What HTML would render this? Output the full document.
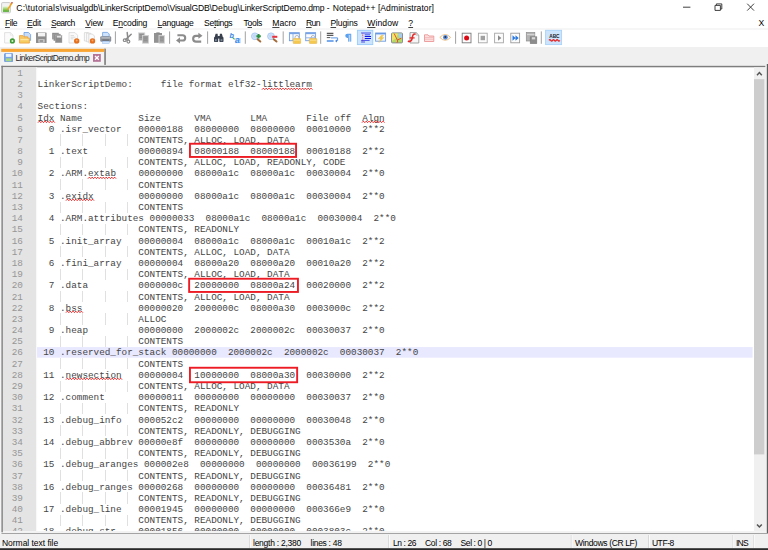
<!DOCTYPE html>
<html><head><meta charset="utf-8"><title>Notepad++</title>
<style>
*{box-sizing:border-box;margin:0;padding:0}
html,body{width:768px;height:550px;overflow:hidden;background:#fff}
body{position:relative;font-family:"Liberation Sans",sans-serif;font-size:8.5px;color:#000}
.abs{position:absolute}
#title{left:16px;top:1.6px;height:12px;line-height:12px;font-size:8.6px;/*TITLELS*/white-space:nowrap;color:#000;transform-origin:0 50%}
.menu{top:16.5px;height:12px;line-height:12px;font-size:8.6px;white-space:nowrap;transform-origin:0 50%}
.menu u{text-decoration:underline;text-decoration-thickness:0.8px;text-decoration-color:#444;text-underline-offset:0.8px}
#menuline{left:0;top:28.4px;width:768px;height:1.2px;background:#f1f1f1}
#tabbar{left:0;top:47px;width:768px;height:19px;background:#f0f0f0}
#tab{left:1.2px;top:49px;width:104.6px;height:16px;background:#f3f3f3;border-right:1.5px solid #747474}
#tabtop{left:1.2px;top:48.8px;width:103.2px;height:3.1px;background:#f9a534}
#tabtext{left:15.5px;top:51.7px;height:12px;line-height:12px;font-size:8.4px;white-space:nowrap;letter-spacing:-0.578px;color:#262626}
#edborder{left:1.4px;top:65.8px;width:765.4px;height:467.2px;border-top:1.5px solid #7e7e7e;border-left:1.5px solid #7e7e7e;border-right:2.5px solid #ececec;border-bottom:1.8px solid #f2f2f2;background:#fff}
#rline{left:766.8px;top:64px;width:1.2px;height:469px;background:#5e5e5e}
#bline{left:1.4px;top:533px;width:766.6px;height:1px;background:#a4a4a4}
#margin{left:2.9px;top:67.3px;width:33.1px;height:463.9px;background:#e4e4e4}
#fold{left:36px;top:67.3px;width:1px;height:463.9px;background:#f6f6f6}
#ed{left:3px;top:67.3px;width:751px;height:463.9px;overflow:hidden;font-family:"Liberation Mono",monospace;font-size:9.333px;color:#454545}
.ln{position:relative;height:11.2px;line-height:11.2px;white-space:pre}
.ln b{position:absolute;left:0;top:0.5px;width:19.9px;text-align:right;font-weight:normal;color:#969696;font-size:9.333px}
.ln span{position:absolute;left:34.6px;top:0.5px}
.ln u{text-decoration:none;position:relative;display:inline-block}
.ln u svg{position:absolute;left:0;top:8.6px;overflow:visible}
.g{position:absolute;top:0;width:1px;height:11.2px;margin-left:34.4px;background:#e0e0e0}
#sb{left:754px;top:67.3px;width:12.6px;height:463.9px;background:#f0f0f0}
#thumb{left:754px;top:79.2px;width:10.3px;height:375.2px;background:#cdcdcd}
#status{left:0;top:534px;width:768px;height:16px;background:#f0f0f0;border-bottom:1.8px solid #2a2a2a}
.st{top:537px;height:12px;line-height:12px;font-size:8.5px;white-space:nowrap}
.sep{top:535px;width:1px;height:13px;background:#d8d8d8;border-right:0.6px solid #fff;box-sizing:content-box}
</style></head><body>
<svg class="abs" style="left:0;top:0" width="768" height="550" viewBox="0 0 768 550">
<rect x="0" y="28.4" width="768" height="1.2" fill="#f1f1f1"/>
<rect x="0" y="47" width="768" height="19" fill="#f0f0f0"/>
<rect x="1.2" y="49" width="103.2" height="16" fill="#f3f3f3"/>
<rect x="104.3" y="48.6" width="1.5" height="16.3" fill="#747474"/>
<rect x="1.2" y="48.8" width="103.2" height="3.1" fill="#f9a534"/>
<rect x="0" y="65.8" width="1.4" height="468" fill="#f4f4f4"/>
<rect x="1.4" y="65.8" width="765.4" height="467.2" fill="#fff"/>
<rect x="1.4" y="65.8" width="764" height="1.5" fill="#7e7e7e"/>
<rect x="1.4" y="65.8" width="1.5" height="466.6" fill="#7e7e7e"/>
<rect x="2.9" y="67.3" width="33.1" height="463.7" fill="#e4e4e4"/>
<rect x="36" y="67.3" width="1.2" height="463.7" fill="#f8f8f8"/>
<rect x="37.1" y="347.1" width="715.5" height="10.6" fill="#e8e8ff"/>
<rect x="754" y="67.3" width="12.8" height="463.9" fill="#f0f0f0"/>
<rect x="754" y="79.2" width="10.3" height="375.2" fill="#cdcdcd"/>
<path d="M757 75.2 L759.4 72.6 L761.8 75.2" stroke="#555" stroke-width="1.5" fill="none"/>
<path d="M757 524.4 L759.4 527 L761.8 524.4" stroke="#555" stroke-width="1.5" fill="none"/>
<rect x="2.9" y="531.1" width="763.9" height="1.9" fill="#f2f2f2"/>
<rect x="766.8" y="64" width="1.2" height="469" fill="#5e5e5e"/>
<rect x="0" y="534" width="768" height="14.2" fill="#f0f0f0"/>
<rect x="1.4" y="533" width="766.6" height="1" fill="#a4a4a4"/>
<rect x="0" y="548.2" width="768" height="1.8" fill="#2a2a2a"/>
<g fill="#d6d6d6">
<rect x="249" y="535" width="0.9" height="13"/><rect x="388.2" y="535" width="0.9" height="13"/><rect x="570.8" y="535" width="0.9" height="13"/>
<rect x="648.1" y="535" width="0.9" height="13"/><rect x="732.5" y="535" width="0.9" height="13"/><rect x="753.4" y="535" width="0.9" height="13"/>
</g>
<g fill="#ffffff">
<rect x="249.9" y="535" width="0.7" height="13"/><rect x="389.1" y="535" width="0.7" height="13"/><rect x="571.7" y="535" width="0.7" height="13"/>
<rect x="649" y="535" width="0.7" height="13"/><rect x="733.4" y="535" width="0.7" height="13"/><rect x="754.3" y="535" width="0.7" height="13"/>
</g>
</svg>
<!-- title bar -->
<svg class="abs" style="left:0;top:0" width="15" height="15" viewBox="0 0 15 15">
<defs><linearGradient id="gg" x1="0" y1="0" x2="0" y2="1"><stop offset="0" stop-color="#eef6e2"/><stop offset="0.55" stop-color="#8fd05a"/><stop offset="1" stop-color="#3fa41e"/></linearGradient></defs>
<rect x="1.6" y="2.6" width="8.8" height="10.2" rx="0.9" fill="#f3f3f3" stroke="#c4c4c4" stroke-width="0.9"/>
<rect x="2.9" y="6.2" width="6.2" height="5.6" fill="url(#gg)"/>
<path d="M11.9 3 L7.6 9.8" stroke="#f2a422" stroke-width="1.5" stroke-linecap="butt"/>
<path d="M7.9 9.3 L7 10.9 L8.5 10" fill="#c89050" stroke="none"/>
<circle cx="12" cy="2.7" r="0.8" fill="#c83838"/>
</svg>
<div id="title" class="abs"><span style="position:absolute;left:0.3px;top:0;white-space:pre;letter-spacing:0.139px">C:\</span><span style="position:absolute;left:11.7px;top:0;white-space:pre;letter-spacing:0.211px">tutorials\</span><span style="position:absolute;left:46.3px;top:0;white-space:pre;letter-spacing:-0.080px">visualgdb\</span><span style="position:absolute;left:84.2px;top:0;white-space:pre;letter-spacing:-0.082px">LinkerScriptDemo\</span><span style="position:absolute;left:153.5px;top:0;white-space:pre;letter-spacing:-0.196px">VisualGDB\</span><span style="position:absolute;left:195.8px;top:0;white-space:pre;letter-spacing:0.080px">Debug\</span><span style="position:absolute;left:224.0px;top:0;white-space:pre;letter-spacing:-0.148px">LinkerScriptDemo.dmp </span><span style="position:absolute;left:310.7px;top:0;white-space:pre;letter-spacing:0.375px">- </span><span style="position:absolute;left:316.7px;top:0;white-space:pre;letter-spacing:0.028px">Notepad++ </span><span style="position:absolute;left:361.9px;top:0;white-space:pre;letter-spacing:0.050px">[Administrator]</span></div>
<svg class="abs" style="left:668px;top:0" width="100" height="16" viewBox="0 0 100 16">
<path d="M15 7.2 H22.4" stroke="#2a2a2a" stroke-width="0.9" fill="none"/>
<path d="M47 5.4 H52.4 V10.4 H47 Z" stroke="#2a2a2a" stroke-width="0.9" fill="none" stroke-linejoin="round"/>
<path d="M48.4 5.2 V3.9 H53.8 V9 H52.6" stroke="#2a2a2a" stroke-width="0.9" fill="none" stroke-linejoin="round"/>
<path d="M79.2 3.7 L86 10.6 M86 3.7 L79.2 10.6" stroke="#2a2a2a" stroke-width="0.9" fill="none"/>
</svg>
<!-- menu -->
<div class="menu abs" style="left:5.0px;letter-spacing:-0.420px"><u>F</u>ile</div>
<div class="menu abs" style="left:27.1px;letter-spacing:-0.271px"><u>E</u>dit</div>
<div class="menu abs" style="left:51.1px;letter-spacing:-0.627px"><u>S</u>earch</div>
<div class="menu abs" style="left:85.2px;letter-spacing:-0.128px"><u>V</u>iew</div>
<div class="menu abs" style="left:112.7px;letter-spacing:-0.163px">E<u>n</u>coding</div>
<div class="menu abs" style="left:157.6px;letter-spacing:-0.307px"><u>L</u>anguage</div>
<div class="menu abs" style="left:204.1px;letter-spacing:-0.366px">Se<u>t</u>tings</div>
<div class="menu abs" style="left:243.6px;letter-spacing:-0.341px">T<u>o</u>ols</div>
<div class="menu abs" style="left:272.3px;letter-spacing:-0.048px"><u>M</u>acro</div>
<div class="menu abs" style="left:306.0px;letter-spacing:-0.633px"><u>R</u>un</div>
<div class="menu abs" style="left:330.5px;letter-spacing:-0.148px"><u>P</u>lugins</div>
<div class="menu abs" style="left:367.2px;letter-spacing:0.104px"><u>W</u>indow</div>
<div class="menu abs" style="left:408.3px;letter-spacing:0.000px"><u>?</u></div>
<div class="menu abs" style="left:758.5px;letter-spacing:0.000px">X</div>

<!-- toolbar -->
<svg class="abs" style="left:0;top:29px" width="768" height="19" viewBox="0 29 768 19" font-family="Liberation Sans, sans-serif">
<defs>
<linearGradient id="gpage" x1="0" y1="0" x2="1" y2="1"><stop offset="0" stop-color="#ffffff"/><stop offset="1" stop-color="#e6e6e6"/></linearGradient>
</defs>
<g stroke="#a2a2a2" stroke-width="1">
<path d="M115.4 31.4 V43.8"/><path d="M169.6 31.4 V43.8"/><path d="M207.6 31.4 V43.8"/><path d="M245.3 31.4 V43.8"/><path d="M283.2 31.4 V43.8"/><path d="M320.7 31.4 V43.8"/><path d="M455.6 31.4 V43.8"/><path d="M541.3 31.4 V43.8"/>
</g>
<!-- 1 new -->
<g>
<path d="M4.6 32.6 H10.4 L13 35.2 V43 H4.6 Z" fill="#fbfbfb" stroke="#dadada" stroke-width="0.8"/>
<path d="M10.4 32.6 V35.2 H13" fill="none" stroke="#e2e2e2" stroke-width="0.6"/>
<circle cx="12.4" cy="40.9" r="2.6" fill="#3f9c34"/>
<circle cx="12.4" cy="40.9" r="1" fill="#d8f0d0"/>
</g>
<!-- 2 open -->
<g>
<path d="M24 32.5 H28.6 L30.6 34.5 V40.4 H24 Z" fill="#c6dcf8" stroke="#6c9ce2" stroke-width="0.8"/>
<path d="M19.5 35.6 H23 L24 36.8 H27.6 V38 H29.4 V43.1 H19.5 Z" fill="#f8c662" stroke="#eba23e" stroke-width="0.8"/>
<path d="M20.4 39.6 H28.6" stroke="#fbe6a0" stroke-width="1.4"/>
<path d="M20.4 41.6 H28.6" stroke="#f3d060" stroke-width="1"/>
</g>
<!-- 3 save (disabled) -->
<g>
<rect x="36" y="32.4" width="10.6" height="10.7" rx="0.6" fill="#8e8e8e"/>
<rect x="38" y="33" width="7.2" height="3.4" fill="#f4f4f4"/>
<rect x="38.4" y="39.2" width="6.2" height="3.4" fill="#cfcfcf"/>
<rect x="39.6" y="40.2" width="3.6" height="1.6" fill="#8a8a8a"/>
</g>
<!-- 4 save all -->
<g>
<rect x="52.2" y="32.8" width="6.6" height="6.6" fill="#8a8a8a"/>
<rect x="53.8" y="34" width="6.8" height="6.8" fill="#909090" stroke="#b4b4b4" stroke-width="0.4"/>
<rect x="55.2" y="35.4" width="6.8" height="7.4" fill="#8c8c8c" stroke="#b4b4b4" stroke-width="0.4"/>
<rect x="56.8" y="35.8" width="4.4" height="1.8" fill="#e2e2e2"/>
</g>
<!-- 5 close -->
<g>
<path d="M69 32.6 H75 L77.6 35.2 V43 H69 Z" fill="#fafafa" stroke="#d8d8d8" stroke-width="0.8"/>
<path d="M70.6 35.6 H74 M70.6 37.2 H75.4 M70.6 38.8 H73.4" stroke="#cfcfcf" stroke-width="0.7"/>
<circle cx="76.7" cy="40.9" r="2.7" fill="#e66f1c"/>
<circle cx="76.7" cy="40.6" r="1" fill="#f6a868"/>
</g>
<!-- 6 close all -->
<g>
<path d="M84.4 32.6 H88.4 V41 H84.4 Z" fill="#fafafa" stroke="#d6d6d6" stroke-width="0.8"/>
<path d="M86.6 33.2 H90.6 V41.8 H86.6 Z" fill="#fafafa" stroke="#d6d6d6" stroke-width="0.8"/>
<path d="M88.8 34 H92.4 L94.4 36 V43 H88.8 Z" fill="#fbfbfb" stroke="#d4d4d4" stroke-width="0.8"/>
<circle cx="92.5" cy="40.9" r="2.7" fill="#e66f1c"/>
<circle cx="92.5" cy="40.6" r="1" fill="#f6a868"/>
</g>
<!-- 7 print -->
<g>
<path d="M102.6 36.6 V32.4 H107.6 L109.2 34 V36.6 Z" fill="#cfe4fc" stroke="#6a9ee0" stroke-width="0.8"/>
<rect x="100.2" y="36.3" width="11" height="5.4" rx="1.2" fill="#8c9098"/>
<rect x="101.4" y="37.4" width="8.6" height="1" fill="#c8ccd2"/>
<rect x="102.4" y="39.6" width="6.8" height="1" fill="#5c6068"/>
<rect x="102.6" y="41.2" width="6.6" height="2.2" fill="#d4e6fb" stroke="#8eb6ea" stroke-width="0.5"/>
</g>
<!-- 8 cut -->
<g stroke="#8a8a8a" fill="none" stroke-linecap="round">
<path d="M127.2 32.6 L128 39.8" stroke-width="1.5"/>
<path d="M131.2 34.2 L125.6 39.6" stroke-width="1.5"/>
<ellipse cx="124.8" cy="40.2" rx="1.5" ry="1.3" stroke-width="1.2"/>
<ellipse cx="128.4" cy="41.6" rx="1.4" ry="1.5" stroke-width="1.2"/>
</g>
<!-- 9 copy -->
<g>
<rect x="138.4" y="32.8" width="6.4" height="7.6" fill="#a4a4a4" stroke="#dcdcdc" stroke-width="0.8"/>
<rect x="142.4" y="35.4" width="6.2" height="7.8" fill="#a0a0a0" stroke="#d4d4d4" stroke-width="0.8"/>
<path d="M139.5 34.5 H143.5 M139.5 36 H142 M139.5 37.5 H142 M143.6 37.2 H147.4 M143.6 38.8 H147.4 M143.6 40.4 H147.4" stroke="#8a8a8a" stroke-width="0.7"/>
</g>
<!-- 10 paste -->
<g>
<rect x="154" y="33" width="8" height="9.8" fill="#929292"/>
<rect x="156.3" y="32.4" width="3.4" height="1.6" fill="#8a8a8a"/>
<rect x="159" y="35.4" width="5.6" height="7.8" fill="#a2a2a2" stroke="#dadada" stroke-width="0.8"/>
<path d="M160 37.4 H163.4 M160 39 H163.4 M160 40.6 H163.4" stroke="#8a8a8a" stroke-width="0.7"/>
</g>
<!-- 11 undo -->
<g fill="none" stroke="#8c8c8c" stroke-width="2.1">
<path d="M177.4 35.3 H182.6 A2.6 2.6 0 0 1 182.6 40.5 H179.5"/>
<path d="M180 37.3 L176 40.5 L180 43.4 Z" fill="#8c8c8c" stroke="none"/>
</g>
<!-- 12 redo -->
<g fill="none" stroke="#8c8c8c" stroke-width="2.1">
<path d="M201.2 41.6 H196 A2.8 2.8 0 0 1 196 35.9 H199"/>
<path d="M198.4 32.8 L202.5 35.8 L198.4 38.8 Z" fill="#8c8c8c" stroke="none"/>
</g>
<!-- 13 find -->
<g fill="#39414e">
<rect x="214" y="37" width="4.2" height="5" rx="0.7"/>
<rect x="219.3" y="37" width="4.2" height="5" rx="0.7"/>
<path d="M214.6 37.4 L215.6 33.8 H217.6 L218 37.4 Z M219.5 37.4 L219.9 33.8 H221.9 L222.9 37.4 Z"/>
<rect x="217.6" y="36" width="2.4" height="2.6"/>
<rect x="215" y="39.2" width="1.8" height="2" fill="#7c8a9c"/>
<rect x="220.6" y="39.2" width="1.8" height="2" fill="#7c8a9c"/>
</g>
<!-- 14 replace -->
<g font-weight="bold" font-style="italic">
<text x="229.6" y="37.6" font-size="7.2" fill="#3a84e4">b</text>
<rect x="235" y="38" width="6" height="5.2" fill="#cfe2fb"/>
<text x="235" y="43.2" font-size="8.6" fill="#3f8aea">a</text>
<path d="M232.8 37.6 L234.6 39.4" stroke="#46b060" stroke-width="1.2"/>
</g>
<!-- 15 zoom in -->
<g>
<circle cx="254.9" cy="36.3" r="3.4" fill="#d3e4fa" stroke="#a6c6f0" stroke-width="0.9"/>
<circle cx="254.6" cy="36.1" r="1.8" fill="#c2d8f6"/>
<path d="M257.6 39.2 L260.3 41.5" stroke="#a46c3c" stroke-width="2" stroke-linecap="round"/>
<path d="M256.4 36.3 H260.8 M258.6 34.1 V38.5" stroke="#2c8e40" stroke-width="1.9"/>
</g>
<!-- 16 zoom out -->
<g>
<circle cx="271" cy="36.3" r="3.4" fill="#d3e4fa" stroke="#a6c6f0" stroke-width="0.9"/>
<circle cx="270.7" cy="36.1" r="1.8" fill="#c2d8f6"/>
<path d="M273.7 39.2 L276.5 41.5" stroke="#a46c3c" stroke-width="2" stroke-linecap="round"/>
<path d="M272.2 36.8 H277.3" stroke="#e8323e" stroke-width="2"/>
</g>
<!-- 17 sync v -->
<g>
<rect x="289.4" y="32.7" width="9.9" height="8" fill="#fafcff" stroke="#6f9ce2" stroke-width="0.9"/>
<path d="M289.4 33.4 H299.3" stroke="#78a4e6" stroke-width="1.5"/>
<path d="M293 34 V40.6" stroke="#7aa4e4" stroke-width="0.8"/>
<path d="M295 38.6 V37.4 A1.9 1.9 0 0 1 298.8 37.4 V38.6" fill="none" stroke="#b4b4b4" stroke-width="1"/>
<rect x="293.2" y="38.5" width="7.4" height="5" rx="0.5" fill="#f4c84e" stroke="#e6b040" stroke-width="0.5"/>
<path d="M293.6 40.2 H300.2" stroke="#fbe090" stroke-width="1"/>
</g>
<!-- 18 sync h -->
<g>
<rect x="305.7" y="32.7" width="9.9" height="8" fill="#fafcff" stroke="#6f9ce2" stroke-width="0.9"/>
<path d="M305.7 33.4 H315.6" stroke="#78a4e6" stroke-width="1.5"/>
<path d="M306 37.8 H315.4" stroke="#7aa4e4" stroke-width="0.8"/>
<path d="M311.2 38.6 V37.4 A1.9 1.9 0 0 1 315 37.4 V38.6" fill="none" stroke="#b4b4b4" stroke-width="1"/>
<rect x="309.4" y="38.5" width="7.4" height="5" rx="0.5" fill="#f4c84e" stroke="#e6b040" stroke-width="0.5"/>
<path d="M309.8 40.2 H316.4" stroke="#fbe090" stroke-width="1"/>
</g>
<!-- 19 wrap -->
<g fill="none">
<path d="M326.8 33.4 H333.4 M326.8 35.3 H333.4" stroke="#5a5a5a" stroke-width="1.2"/>
<path d="M326.8 37.6 H330.4" stroke="#5a5a5a" stroke-width="1"/>
<path d="M331 37.9 H337.6 V40.6 H336" stroke="#5a94e6" stroke-width="1"/>
<path d="M337 39.4 L335 41 L337 42.6 Z" fill="#4a86de" stroke="none"/>
<path d="M326.8 41 H333.6" stroke="#6aa2ec" stroke-width="1.8"/>
</g>
<!-- 20 pilcrow -->
<g>
<path d="M347.6 33.7 H351.2 V41.6 H350 V34.9 H349.2 V41.6 H348 V38 H347.4 A2.15 2.15 0 0 1 347.4 33.7 Z" fill="#5aa0f0"/>
<rect x="348" y="34.6" width="3.2" height="7" fill="#8fc0f6" opacity="0.55"/>
</g>
<!-- 21 indent guide active -->
<g>
<rect x="357.4" y="30.3" width="15.4" height="14.3" fill="#cce4fc" stroke="#9acbf8" stroke-width="0.9"/>
<path d="M362.7 33.4 V42" stroke="#ee6a8a" stroke-width="1.1" stroke-dasharray="1 0.7"/>
<path d="M361.1 33 H371 M361.1 42 H365" stroke="#2a2ae4" stroke-width="0.8"/>
<path d="M364.8 34.8 H370" stroke="#2a2ae4" stroke-width="0.8"/>
<path d="M364.8 36.5 H371 M364.8 38.5 H371" stroke="#1212e6" stroke-width="1.1"/>
<path d="M361.1 40.4 H369.6" stroke="#2a2ae4" stroke-width="0.8"/>
</g>
<!-- 22 udl -->
<g>
<rect x="375.6" y="33" width="10" height="8.2" fill="#f2f7ff" stroke="#6f9ce2" stroke-width="0.9"/>
<path d="M375.6 33.7 H385.6" stroke="#6a9ae4" stroke-width="1.4"/>
<path d="M381.4 35.2 L378.2 38.8 H380.6 L379 42.6 L384 37.6 H381.6 L383.6 35.2 Z" fill="#f2ca4c" stroke="#e6b83c" stroke-width="0.3"/>
</g>
<!-- 23 doc map -->
<g>
<rect x="391.5" y="32.9" width="11" height="10" rx="1" fill="#b6d868" stroke="#8a8c98" stroke-width="1"/>
<path d="M392 33.4 H398 L396.5 38 L392 41 Z" fill="#f0e468"/>
<path d="M398 33.4 H402 V37.5 L399.6 38.5 Z" fill="#a8ccf0"/>
<path d="M394.2 33.6 L397.8 41 L397 42.8 M397.4 40 L401.4 38.2" stroke="#e8502c" stroke-width="1" fill="none"/>
</g>
<!-- 24 function list -->
<g>
<path d="M410 32.6 H416.2 L418.8 35.2 V43 H410 Z" fill="#f6f6f6" stroke="#8e8e8e" stroke-width="0.8"/>
<path d="M416.2 32.6 V35.2 H418.8" fill="none" stroke="#a8a8a8" stroke-width="0.6"/>
<path d="M415.6 34.2 C412.8 33.4 412.6 36 412.2 38 C411.8 40.4 410.6 42 407.8 41.2" stroke="#e42a2a" stroke-width="1.6" fill="none"/>
<path d="M409.6 37.9 H414.6" stroke="#e42a2a" stroke-width="1.3"/>
</g>
<!-- 25 folder workspace -->
<g>
<path d="M424.5 34.8 H428 L429 36 H433.8 V41.5 H424.5 Z" fill="#fbe2e2" stroke="#ea8c8c" stroke-width="0.8"/>
<path d="M425 37.4 H433.4 M425 39.2 H433.4" stroke="#f0aaaa" stroke-width="0.7"/>
</g>
<!-- 26 eye -->
<g>
<path d="M439.8 37.4 Q445.2 31.6 450.6 37.4 Q445.2 43.2 439.8 37.4 Z" fill="#fffaf2" stroke="#e8ba7c" stroke-width="0.9"/>
<circle cx="445.4" cy="37.3" r="2.4" fill="#5a8ed8"/>
<circle cx="445.4" cy="37.1" r="1" fill="#22304e"/>
</g>
<!-- 27 record -->
<g>
<rect x="462.2" y="33.2" width="8.8" height="9.6" fill="#fcfcfc" stroke="#7a7a7a" stroke-width="0.9"/>
<circle cx="466.6" cy="38" r="2.5" fill="#dc0a14"/>
</g>
<!-- 28 stop -->
<g>
<rect x="478.4" y="33.2" width="8.8" height="9.6" fill="#fcfcfc" stroke="#a6a6a6" stroke-width="0.9"/>
<rect x="480.6" y="35.8" width="4.4" height="4.4" fill="#a0a0a0"/>
</g>
<!-- 29 play -->
<g>
<rect x="494.6" y="33.2" width="8.8" height="9.6" fill="#fcfcfc" stroke="#a6a6a6" stroke-width="0.9"/>
<path d="M498 35.3 L501.3 38 L498 40.7 Z" fill="#8a8a8a"/>
</g>
<!-- 30 play multi -->
<g>
<rect x="510.8" y="33.2" width="8.8" height="9.6" fill="#fcfcfc" stroke="#9a9a9a" stroke-width="0.9"/>
<path d="M512.5 35.3 L515.5 38 L512.5 40.7 Z M515.5 35.3 L518.7 38 L515.5 40.7 Z" fill="#2a78e0"/>
</g>
<!-- 31 save macro -->
<g>
<rect x="526.3" y="32.5" width="8.5" height="8.5" fill="#b4b4b4" stroke="#8e8e8e" stroke-width="0.7"/>
<path d="M527 34.6 H534.5" stroke="#e0e0e0" stroke-width="0.8"/>
<rect x="530.2" y="36.8" width="6.6" height="6.8" fill="#8c8c8c" stroke="#7a7a7a" stroke-width="0.6"/>
<rect x="531.8" y="37.2" width="3.4" height="2.2" fill="#d8d8d8"/>
</g>
<!-- 32 spell -->
<g>
<rect x="545.6" y="30.3" width="16" height="14.3" fill="#cce4fc" stroke="#a8d2f8" stroke-width="0.9"/>
<text x="549.2" y="38.2" font-size="5.8" font-weight="bold" fill="#222" textLength="10.4" lengthAdjust="spacingAndGlyphs">ABC</text>
<path d="M549 40.4 q0.9 -1.3 1.8 0 t1.8 0 t1.8 0 t1.8 0 t1.8 0 t1.8 0" stroke="#e22a2a" stroke-width="1.4" fill="none"/>
</g>
</svg>

<!-- tab bar -->
<svg class="abs" style="left:4px;top:53px" width="9.2" height="9.2" viewBox="0 0 10 10">
<rect x="0.5" y="0.5" width="9" height="9" rx="1" fill="#78a4ea" stroke="#5a8ce0" stroke-width="0.8"/>
<rect x="2" y="0.8" width="6" height="3.4" fill="#eef4ff"/>
<rect x="2" y="5.8" width="6" height="3.2" fill="#a8d884"/>
</svg>
<div id="tabtext" class="abs">LinkerScriptDemo.dmp</div>
<svg class="abs" style="left:93px;top:53.8px" width="8" height="8" viewBox="0 0 8 8">
<rect x="0" y="0" width="7.8" height="7.8" fill="#b57397"/>
<path d="M2 2 L5.8 5.8 M5.8 2 L2 5.8" stroke="#fff" stroke-width="1.4"/>
</svg>
<!-- editor -->
<div id="ed" class="abs">
<div class="ln"><b>1</b><span></span></div>
<div class="ln"><b>2</b><span>LinkerScriptDemo:     file format elf32-<u>littlearm<svg width="50.4" height="2" viewBox="0 0 50.4 2"><path d="M0.0 1.6 L1.4 0.2 L2.8 1.6 L4.2 0.2 L5.6 1.6 L7.0 0.2 L8.4 1.6 L9.8 0.2 L11.2 1.6 L12.6 0.2 L14.0 1.6 L15.4 0.2 L16.8 1.6 L18.2 0.2 L19.6 1.6 L21.0 0.2 L22.4 1.6 L23.8 0.2 L25.2 1.6 L26.6 0.2 L28.0 1.6 L29.4 0.2 L30.8 1.6 L32.2 0.2 L33.6 1.6 L35.0 0.2 L36.4 1.6 L37.8 0.2 L39.2 1.6 L40.6 0.2 L42.0 1.6 L43.4 0.2 L44.8 1.6 L46.2 0.2 L47.6 1.6 L49.0 0.2 L50.4 1.6" fill="none" stroke="#f41414" stroke-width="1"/></svg></u></span></div>
<div class="ln"><b>3</b><span></span></div>
<div class="ln"><b>4</b><span>Sections:</span></div>
<div class="ln"><b>5</b><span><u>Idx<svg width="16.8" height="2" viewBox="0 0 16.8 2"><path d="M0.0 1.6 L1.4 0.2 L2.8 1.6 L4.2 0.2 L5.6 1.6 L7.0 0.2 L8.4 1.6 L9.8 0.2 L11.2 1.6 L12.6 0.2 L14.0 1.6 L15.4 0.2 L16.8 1.6" fill="none" stroke="#f41414" stroke-width="1"/></svg></u> Name          Size      VMA       LMA       File off  <u>Algn<svg width="22.4" height="2" viewBox="0 0 22.4 2"><path d="M0.0 1.6 L1.4 0.2 L2.8 1.6 L4.2 0.2 L5.6 1.6 L7.0 0.2 L8.4 1.6 L9.8 0.2 L11.2 1.6 L12.6 0.2 L14.0 1.6 L15.4 0.2 L16.8 1.6 L18.2 0.2 L19.6 1.6 L21.0 0.2 L22.4 1.6" fill="none" stroke="#f41414" stroke-width="1"/></svg></u></span></div>
<div class="ln"><b>6</b><span>  0 .isr_vector   00000188  08000000  08000000  00010000  2**2</span></div>
<div class="ln"><b>7</b><i class="g" style="left:22.4px"></i><i class="g" style="left:44.8px"></i><i class="g" style="left:67.2px"></i><i class="g" style="left:89.6px"></i><span>                  CONTENTS, ALLOC, LOAD, DATA</span></div>
<div class="ln"><b>8</b><span>  1 .text         00000894  08000188  08000188  00010188  2**2</span></div>
<div class="ln"><b>9</b><i class="g" style="left:22.4px"></i><i class="g" style="left:44.8px"></i><i class="g" style="left:67.2px"></i><i class="g" style="left:89.6px"></i><span>                  CONTENTS, ALLOC, LOAD, READONLY, CODE</span></div>
<div class="ln"><b>10</b><span>  2 .ARM.<u>extab<svg width="28.0" height="2" viewBox="0 0 28.0 2"><path d="M0.0 1.6 L1.4 0.2 L2.8 1.6 L4.2 0.2 L5.6 1.6 L7.0 0.2 L8.4 1.6 L9.8 0.2 L11.2 1.6 L12.6 0.2 L14.0 1.6 L15.4 0.2 L16.8 1.6 L18.2 0.2 L19.6 1.6 L21.0 0.2 L22.4 1.6 L23.8 0.2 L25.2 1.6 L26.6 0.2 L28.0 1.6" fill="none" stroke="#f41414" stroke-width="1"/></svg></u>    00000000  08000a1c  08000a1c  00030004  2**0</span></div>
<div class="ln"><b>11</b><i class="g" style="left:22.4px"></i><i class="g" style="left:44.8px"></i><i class="g" style="left:67.2px"></i><i class="g" style="left:89.6px"></i><span>                  CONTENTS</span></div>
<div class="ln"><b>12</b><span>  3 .<u>exidx<svg width="28.0" height="2" viewBox="0 0 28.0 2"><path d="M0.0 1.6 L1.4 0.2 L2.8 1.6 L4.2 0.2 L5.6 1.6 L7.0 0.2 L8.4 1.6 L9.8 0.2 L11.2 1.6 L12.6 0.2 L14.0 1.6 L15.4 0.2 L16.8 1.6 L18.2 0.2 L19.6 1.6 L21.0 0.2 L22.4 1.6 L23.8 0.2 L25.2 1.6 L26.6 0.2 L28.0 1.6" fill="none" stroke="#f41414" stroke-width="1"/></svg></u>        00000000  08000a1c  08000a1c  00030004  2**0</span></div>
<div class="ln"><b>13</b><i class="g" style="left:22.4px"></i><i class="g" style="left:44.8px"></i><i class="g" style="left:67.2px"></i><i class="g" style="left:89.6px"></i><span>                  CONTENTS</span></div>
<div class="ln"><b>14</b><span>  4 .ARM.attributes 00000033  08000a1c  08000a1c  00030004  2**0</span></div>
<div class="ln"><b>15</b><i class="g" style="left:22.4px"></i><i class="g" style="left:44.8px"></i><i class="g" style="left:67.2px"></i><i class="g" style="left:89.6px"></i><span>                  CONTENTS, READONLY</span></div>
<div class="ln"><b>16</b><span>  5 .init_array   00000004  08000a1c  08000a1c  00010a1c  2**2</span></div>
<div class="ln"><b>17</b><i class="g" style="left:22.4px"></i><i class="g" style="left:44.8px"></i><i class="g" style="left:67.2px"></i><i class="g" style="left:89.6px"></i><span>                  CONTENTS, ALLOC, LOAD, DATA</span></div>
<div class="ln"><b>18</b><span>  6 .fini_array   00000004  08000a20  08000a20  00010a20  2**2</span></div>
<div class="ln"><b>19</b><i class="g" style="left:22.4px"></i><i class="g" style="left:44.8px"></i><i class="g" style="left:67.2px"></i><i class="g" style="left:89.6px"></i><span>                  CONTENTS, ALLOC, LOAD, DATA</span></div>
<div class="ln"><b>20</b><span>  7 .data         0000000c  20000000  08000a24  00020000  2**2</span></div>
<div class="ln"><b>21</b><i class="g" style="left:22.4px"></i><i class="g" style="left:44.8px"></i><i class="g" style="left:67.2px"></i><i class="g" style="left:89.6px"></i><span>                  CONTENTS, ALLOC, LOAD, DATA</span></div>
<div class="ln"><b>22</b><span>  8 .<u>bss<svg width="16.8" height="2" viewBox="0 0 16.8 2"><path d="M0.0 1.6 L1.4 0.2 L2.8 1.6 L4.2 0.2 L5.6 1.6 L7.0 0.2 L8.4 1.6 L9.8 0.2 L11.2 1.6 L12.6 0.2 L14.0 1.6 L15.4 0.2 L16.8 1.6" fill="none" stroke="#f41414" stroke-width="1"/></svg></u>          00000020  2000000c  08000a30  0003000c  2**2</span></div>
<div class="ln"><b>23</b><i class="g" style="left:22.4px"></i><i class="g" style="left:44.8px"></i><i class="g" style="left:67.2px"></i><i class="g" style="left:89.6px"></i><span>                  ALLOC</span></div>
<div class="ln"><b>24</b><span>  9 .heap         00000000  2000002c  2000002c  00030037  2**0</span></div>
<div class="ln"><b>25</b><i class="g" style="left:22.4px"></i><i class="g" style="left:44.8px"></i><i class="g" style="left:67.2px"></i><i class="g" style="left:89.6px"></i><span>                  CONTENTS</span></div>
<div class="ln cur"><b>26</b><span> 10 .reserved_for_stack 00000000  2000002c  2000002c  00030037  2**0</span></div>
<div class="ln"><b>27</b><i class="g" style="left:22.4px"></i><i class="g" style="left:44.8px"></i><i class="g" style="left:67.2px"></i><i class="g" style="left:89.6px"></i><span>                  CONTENTS</span></div>
<div class="ln"><b>28</b><span> 11 .<u>newsection<svg width="56.0" height="2" viewBox="0 0 56.0 2"><path d="M0.0 1.6 L1.4 0.2 L2.8 1.6 L4.2 0.2 L5.6 1.6 L7.0 0.2 L8.4 1.6 L9.8 0.2 L11.2 1.6 L12.6 0.2 L14.0 1.6 L15.4 0.2 L16.8 1.6 L18.2 0.2 L19.6 1.6 L21.0 0.2 L22.4 1.6 L23.8 0.2 L25.2 1.6 L26.6 0.2 L28.0 1.6 L29.4 0.2 L30.8 1.6 L32.2 0.2 L33.6 1.6 L35.0 0.2 L36.4 1.6 L37.8 0.2 L39.2 1.6 L40.6 0.2 L42.0 1.6 L43.4 0.2 L44.8 1.6 L46.2 0.2 L47.6 1.6 L49.0 0.2 L50.4 1.6 L51.8 0.2 L53.2 1.6 L54.6 0.2 L56.0 1.6" fill="none" stroke="#f41414" stroke-width="1"/></svg></u>   00000004  10000000  08000a30  00030000  2**2</span></div>
<div class="ln"><b>29</b><i class="g" style="left:22.4px"></i><i class="g" style="left:44.8px"></i><i class="g" style="left:67.2px"></i><i class="g" style="left:89.6px"></i><span>                  CONTENTS, ALLOC, LOAD, DATA</span></div>
<div class="ln"><b>30</b><span> 12 .comment      00000011  00000000  00000000  00030037  2**0</span></div>
<div class="ln"><b>31</b><i class="g" style="left:22.4px"></i><i class="g" style="left:44.8px"></i><i class="g" style="left:67.2px"></i><i class="g" style="left:89.6px"></i><span>                  CONTENTS, READONLY</span></div>
<div class="ln"><b>32</b><span> 13 .debug_info   000052c2  00000000  00000000  00030048  2**0</span></div>
<div class="ln"><b>33</b><i class="g" style="left:22.4px"></i><i class="g" style="left:44.8px"></i><i class="g" style="left:67.2px"></i><i class="g" style="left:89.6px"></i><span>                  CONTENTS, READONLY, DEBUGGING</span></div>
<div class="ln"><b>34</b><span> 14 .debug_abbrev 00000e8f  00000000  00000000  0003530a  2**0</span></div>
<div class="ln"><b>35</b><i class="g" style="left:22.4px"></i><i class="g" style="left:44.8px"></i><i class="g" style="left:67.2px"></i><i class="g" style="left:89.6px"></i><span>                  CONTENTS, READONLY, DEBUGGING</span></div>
<div class="ln"><b>36</b><span> 15 .debug_aranges 000002e8  00000000  00000000  00036199  2**0</span></div>
<div class="ln"><b>37</b><i class="g" style="left:22.4px"></i><i class="g" style="left:44.8px"></i><i class="g" style="left:67.2px"></i><i class="g" style="left:89.6px"></i><span>                  CONTENTS, READONLY, DEBUGGING</span></div>
<div class="ln"><b>38</b><span> 16 .debug_ranges 00000268  00000000  00000000  00036481  2**0</span></div>
<div class="ln"><b>39</b><i class="g" style="left:22.4px"></i><i class="g" style="left:44.8px"></i><i class="g" style="left:67.2px"></i><i class="g" style="left:89.6px"></i><span>                  CONTENTS, READONLY, DEBUGGING</span></div>
<div class="ln"><b>40</b><span> 17 .debug_line   00001945  00000000  00000000  000366e9  2**0</span></div>
<div class="ln"><b>41</b><i class="g" style="left:22.4px"></i><i class="g" style="left:44.8px"></i><i class="g" style="left:67.2px"></i><i class="g" style="left:89.6px"></i><span>                  CONTENTS, READONLY, DEBUGGING</span></div>
<div class="ln"><b>42</b><span> 18 .debug_str    00001856  00000000  00000000  0003803c  2**0</span></div>
</div>
<svg class="abs" style="left:0;top:130px" width="768" height="270" viewBox="0 130 768 270">
<g fill="none" stroke="#ed1c24" stroke-width="1.9">
<rect x="189.95" y="143.75" width="106.1" height="13.2"/>
<rect x="189.15" y="278.75" width="108.8" height="13.2"/>
<rect x="189.95" y="367.75" width="107.2" height="14.5"/>
</g>
</svg>
<!-- scrollbar -->
<!-- status -->
<div class="st abs" style="left:2.0px;letter-spacing:-0.032px">Normal text file</div>
<div class="st abs" style="left:253.0px;letter-spacing:-0.255px">length : 2,380</div>
<div class="st abs" style="left:310.6px;letter-spacing:-0.303px">lines : 48</div>
<div class="st abs" style="left:393.0px;letter-spacing:-0.417px">Ln : 26</div>
<div class="st abs" style="left:425.1px;letter-spacing:-0.371px">Col : 68</div>
<div class="st abs" style="left:460.6px;letter-spacing:-0.407px">Sel : 0 | 0</div>
<div class="st abs" style="left:575.1px;letter-spacing:-0.347px">Windows (CR LF)</div>
<div class="st abs" style="left:651.9px;letter-spacing:-0.423px">UTF-8</div>
<div class="st abs" style="left:735.9px;letter-spacing:-0.686px">INS</div>

</body></html>
